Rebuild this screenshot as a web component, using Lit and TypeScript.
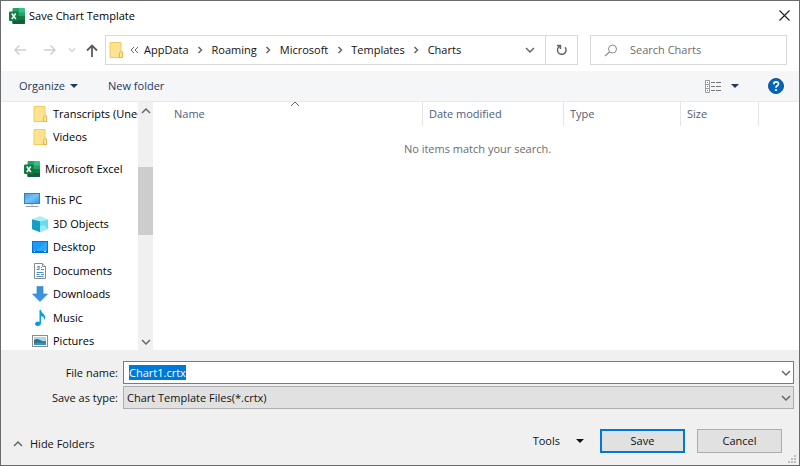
import { LitElement, html, css, svg, nothing } from "lit";
import { customElement, query } from "lit/decorators.js";

const chevron = (d: string, size = 10) => html`<svg class="chev" width=${size} height=${size} viewBox="0 0 10 10" aria-hidden="true"><path d=${d} /></svg>`;
const DOWN = "M1 3l4 4 4-4";
const UP = "M1 7l4-4 4 4";
const RIGHT = "M3.500 2l3 3-3 3";

const glyphs: Record<string, unknown> = {
  folder: svg`<path d="M2 .5h11v9.500h1.500v5.500H2z" fill="#ffe391" stroke="#efcb62"/><path d="M11.500 15.500v-4.500l1.500-1.500 1.500 1v5z" fill="#ffe9a3" stroke="#e3b645"/>`,
  excel: svg`<path d="M4.500 0H10v8H3.500V1q0-1 1-1z" fill="#21a366"/><path d="M10 0h5q1 0 1 1v4h-6z" fill="#33c481"/><path d="M10 4.500h6V8h-6z" fill="#21a366"/><path d="M3.500 8H10v8H4.500q-1 0-1-1z" fill="#185c37"/><path d="M10 8h6v7q0 1-1 1h-5z" fill="#107c41"/><path d="M3.500 12H16v3q0 1-1 1H4.500q-1 0-1-1z" fill="#185c37"/><rect y="3.500" width="9.500" height="9.500" rx="1" fill="#107c41"/><path d="M2.800 5.500l4 5.500M6.800 5.500l-4 5.500" stroke="#fff" stroke-width="1.500" fill="none"/>`,
  pc: svg`<defs><linearGradient id="pc" x2="1" y2="1"><stop stop-color="#3f9fe8"/><stop offset=".5" stop-color="#75c3fb"/><stop offset="1" stop-color="#2a93ee"/></linearGradient></defs><rect x=".5" y="1.500" width="15" height="10" fill="url(#pc)" stroke="#3b7fb5"/><path d="M6.500 12h3v1.500h-3z" fill="#c9d3dc"/><path d="M1.500 14.500h13" stroke="#8fa0ae"/>`,
  objects: svg`<path d="M0 3.500L8 1v15L0 13z" fill="#1dabc9"/><path d="M8 5l8-1.500V13l-8 3z" fill="#67dbe9"/><path d="M0 3.500L8 0l8 3.500L8 5.500z" fill="#a9f0f6"/><path d="M0 3.500l8 2V16l-8-3z" fill="#169fc3"/><path d="M8 10l4-1 4 4-8 3z" fill="#9ceaf3"/>`,
  desktop: svg`<rect x=".5" y="2.500" width="15" height="11" fill="#1a9bfb" stroke="#0873cf"/><path d="M5 11L14 3h1v9H5z" fill="#40b0ff" opacity=".6"/><path d="M1 12h14v1H1z" fill="#0766b8"/><path d="M2 12.500h1M12 12.500h2" stroke="#d3ecff"/>`,
  documents: svg`<path d="M2.500.5h8l3 3v12h-11z" fill="#fff" stroke="#8a8a8a"/><path d="M10.500.5v3h3" fill="#eee" stroke="#8a8a8a"/><path d="M4.500 6.500h3M9 6.500h3M9 4.500h1M4.500 9.500h7M4.500 11.500h3M9 11.500h3M4.500 13.500h7" stroke="#4a91c8"/><path d="M5 4.500l2-1.500v3" stroke="#1b7fd0" fill="none"/>`,
  downloads: svg`<path d="M5 .5h6V8h4.500L8 15.500.5 8H5z" fill="#3a92dc" stroke="#2d7fca" stroke-width=".6"/>`,
  music: svg`<path d="M7.500 0H9q.2 2.500 2.500 4 2.500 2 1.200 6-.8-3.500-3.700-4v7q0 2.500-3.200 3-2.800.2-2.800-1.900 0-2.400 3-2.500 1 0 1.500.3z" fill="#0c9bea"/>`,
  pictures: svg`<rect x=".5" y="2.500" width="15" height="11" fill="#fff" stroke="#8c8c8c"/><path d="M2 4h12v8H2z" fill="#a8d8f5"/><path d="M2 7q3-2 6 0t6 1v4H2z" fill="#416f70"/><path d="M2 10.500q6-2 12-.5v2H2z" fill="#2c93d2"/>`,
};
const icon = (name: string) => html`<svg class="icon" width="16" height="16" viewBox="0 0 16 16" aria-hidden="true">${glyphs[name]}</svg>`;

const tree = [
  { icon: "folder", label: "Transcripts (Unedited)", level: 2 },
  { icon: "folder", label: "Videos", level: 2 },
  { icon: "excel", label: "Microsoft Excel", level: 1, gap: true },
  { icon: "pc", label: "This PC", level: 1, gap: true },
  { icon: "objects", label: "3D Objects", level: 2 },
  { icon: "desktop", label: "Desktop", level: 2 },
  { icon: "documents", label: "Documents", level: 2 },
  { icon: "downloads", label: "Downloads", level: 2 },
  { icon: "music", label: "Music", level: 2 },
  { icon: "pictures", label: "Pictures", level: 2 },
];
const crumbs = ["AppData", "Roaming", "Microsoft", "Templates", "Charts"];

@customElement("app-root")
export class AppRoot extends LitElement {
  static styles = css`
    :host { display: flex; flex-direction: column; box-sizing: border-box; min-height: 100vh; border: 1px solid #6b6a6d; background: #fff; color: #111; font: 11px/16px "Open Sans", "Noto Sans", sans-serif; }
    *, *::before { box-sizing: border-box; }
    button, input, select { font: inherit; color: inherit; margin: 0; padding: 0; border: 0; background: none; border-radius: 0; outline: none; }
    button { display: inline-flex; align-items: center; justify-content: center; white-space: nowrap; }
    svg { display: block; flex: none; }
    .chev path { fill: none; stroke: #666; stroke-width: 1.5; }
    .title { display: flex; align-items: center; height: 29px; padding: 0 9px 0 8px; gap: 4px; }
    h1 { flex: 1; margin: 0; font: inherit; color: #000; }
    .nav { display: flex; align-items: center; padding: 5px 12px 6px 12px; height: 41px; }
    .nav > .step { width: 14px; margin-right: 16px; }
    .nav > .recent { width: 10px; margin-right: 2px; margin-left: -6px; }
    .recent path { stroke: #ccc; }
    .nav > .up { width: 26px; }
    .address { display: flex; flex: 1; height: 30px; border: 1px solid #d9d9d9; align-items: stretch; }
    .crumbs { display: flex; flex: 1; align-items: center; padding-left: 2px; }
    .more { width: 20px; height: 16px; padding-left: 1px; }
    .more path { fill: none; stroke: #666; }
    .sep { width: 23px; display: flex; justify-content: center; }
    .drop { width: 30px; }
    .refresh { width: 32px; border-left: 1px solid #d9d9d9; }
    .search { display: flex; align-items: center; width: 197px; height: 30px; margin-left: 12px; padding-left: 13px; gap: 12px; border: 1px solid #d9d9d9; }
    .search input { flex: 1; min-width: 0; }
    .search input::placeholder { color: #6d6d6d; opacity: 1; }
    .tools { display: flex; align-items: center; height: 31px; padding: 0 15px 0 18px; background: #f5f6f7; border-bottom: 1px solid #e8e9eb; color: #1e395b; }
    .organize { gap: 5px; margin-right: 30px; }
    .view { margin-left: auto; gap: 10px; margin-right: 29px; }
    .body { display: flex; flex: 1; min-height: 248px; }
    .side { display: flex; width: 152px; margin-right: 7px; height: 248px; }
    .treebox { flex: 1; overflow: hidden; }
    ul { list-style: none; margin: 0; padding: 0; height: calc(100% + 3px); display: flex; flex-direction: column; }
    li { flex: 1; display: flex; align-items: center; gap: 5px; padding-left: 23px; white-space: nowrap; color: #000; }
    li.child { padding-left: 31px; }
    li.gap { margin-top: 8px; }
    .scroll { width: 15px; background: #f0f0f0; display: flex; flex-direction: column; align-items: center; }
    .scroll button { width: 15px; height: 17px; }
    .thumb { width: 15px; height: 68px; margin: 48px 0 auto; background: #cdcdcd; }
    .list { flex: 1; min-width: 0; padding-left: 8px; }
    table { width: 100%; table-layout: fixed; border-collapse: separate; border-spacing: 0; }
    .name { width: 255px; } .date { width: 141px; } .type { width: 117px; } .size { width: 78px; }
    th { position: relative; height: 24px; padding: 0 6px; text-align: left; font-weight: normal; color: #4c607a; border-right: 1px solid #e5e5e5; }
    th.rest { border: 0; }
    .sort { position: absolute; top: -3px; left: 50%; margin-left: -5px; }
    .sort path { stroke-width: 1; }
    td { padding: 15px 12px 0 0; text-align: center; color: #6d6d6d; }
    .foot { background: #f0f0f0; padding: 11px 5px 0 12px; min-height: 115px; position: relative; }
    .form { display: grid; grid-template-columns: 105px 1fr; column-gap: 5px; row-gap: 2px; align-items: center; }
    .form label { text-align: right; }
    .combo { display: grid; grid-template-columns: 1fr 17px; height: 23px; }
    .combo > * { grid-row: 1; }
    .combo .chev { grid-column: 2; align-self: center; justify-self: center; pointer-events: none; }
    .combo input, .combo select { grid-column: 1 / 3; width: 100%; height: 23px; appearance: none; }
    .combo input { border: 1px solid #2a8fe0; background: #fff; padding: 0 18px 1px 5px; }
    .combo input:focus { outline: 1px solid #2a8fe0; outline-offset: -1px; }
    .combo input::selection { background: #0078d7; color: #fff; }
    .combo select { border: 1px solid #adadad; background: #e1e1e1; padding: 0 18px 0 3px; }
    .actions { display: flex; align-items: center; margin-top: 20px; padding-right: 12px; }
    .hide { gap: 7px; margin: 5px auto 0 0; }
    .menu { gap: 16px; margin-right: 16px; }
    .push { width: 85px; height: 24px; background: #e1e1e1; border: 1px solid #adadad; }
    .push.primary { border: 2px solid #0078d7; margin-right: 12px; }
    .grip { position: absolute; right: 2px; bottom: 1px; }
  `;

  @query("#file") private file!: HTMLInputElement;

  firstUpdated() {
    this.file.focus();
    this.file.select();
  }

  render() {
    const caret = (fill: string) => html`<svg width="8" height="4" viewBox="0 0 8 4" aria-hidden="true"><path d="M0 0h8L4 4z" fill=${fill} /></svg>`;
    return html`
      <header class="title">
        ${icon("excel")}
        <h1>Save Chart Template</h1>
        <button aria-label="Close"><svg width="11" height="11" viewBox="0 0 11 11"><path d="M.5.5l10 10M10.500.5l-10 10" stroke="#222" stroke-width="1.200" /></svg></button>
      </header>
      <nav class="nav">
        <button class="step" aria-label="Back"><svg width="14" height="12" viewBox="0 0 14 12"><path d="M13 6H2M6.500 1.500L2 6l4.500 4.500" fill="none" stroke="#d0d0d0" stroke-width="1.500" /></svg></button>
        <button class="step" aria-label="Forward"><svg width="14" height="12" viewBox="0 0 14 12"><path d="M1 6h11M7.500 1.500L12 6l-4.500 4.500" fill="none" stroke="#d0d0d0" stroke-width="1.500" /></svg></button>
        <button class="recent" aria-label="Recent locations">${chevron(DOWN, 8)}</button>
        <button class="up" aria-label="Up"><svg width="12" height="13" viewBox="0 0 12 13"><path d="M6 13V2M1 6.500l5-5 5 5" fill="none" stroke="#5c5c5c" stroke-width="1.800" /></svg></button>
        <div class="address">
          <div class="crumbs">
            ${icon("folder")}
            <button class="more" aria-label="More folders"><svg width="9" height="8" viewBox="0 0 9 8"><path d="M4 1L1 4l3 3M8 1L5 4l3 3" /></svg></button>
            ${crumbs.map((c, i) => html`${i ? html`<span class="sep">${chevron(RIGHT)}</span>` : nothing}<button>${c}</button>`)}
          </div>
          <button class="drop" aria-label="Previous locations">${chevron(DOWN)}</button>
          <button class="refresh" aria-label="Refresh"><svg width="12" height="12" viewBox="0 0 12 12"><path d="M1 1.500h3.500v3.500M4.200 2A4.300 4.300 0 1 0 9 3.200" fill="none" stroke="#666" stroke-width="1.500" /></svg></button>
        </div>
        <div class="search">
          <svg width="14" height="13" viewBox="0 0 14 13" aria-hidden="true"><circle cx="8.500" cy="5" r="4" fill="none" stroke="#8a8a8a" /><path d="M5.500 8L1 12" stroke="#8a8a8a" stroke-width="1.200" /></svg>
          <input type="text" aria-label="Search Charts" placeholder="Search Charts" />
        </div>
      </nav>
      <div class="tools">
        <button class="organize">Organize ${caret("#1e395b")}</button>
        <button>New folder</button>
        <button class="view" aria-label="Change your view">
          <svg width="16" height="13" viewBox="0 0 16 13"><path d="M.5.5h4v12h-4zM.5 4.500h4M.5 8.500h4" fill="#fff" stroke="#999" /><path d="M2 2.500h1M2 6.500h1M2 10.500h1" stroke="#4d7fae" /><path d="M6 2.500h4M11 2.500h5M6 6.500h4M11 6.500h5M6 10.500h4M11 10.500h5" stroke="#777" /></svg>
          ${caret("#1e395b")}
        </button>
        <button aria-label="Help"><svg width="16" height="16" viewBox="0 0 16 16"><circle cx="8" cy="8" r="7.500" fill="#0067c0" stroke="#1b4f87" /><path d="M5.700 6.200q0-2.400 2.400-2.400t2.400 2q0 1.200-1.300 2T8 9.800" fill="none" stroke="#fff" stroke-width="1.700" /><circle cx="8" cy="12" r="1.100" fill="#fff" /></svg></button>
      </div>
      <main class="body">
        <aside class="side">
          <div class="treebox"><ul>
            ${tree.map((n) => html`<li class="${n.level === 2 ? "child" : ""} ${n.gap ? "gap" : ""}">${icon(n.icon)}<span>${n.label}</span></li>`)}
          </ul></div>
          <div class="scroll">
            <button aria-label="Scroll up">${chevron(UP)}</button>
            <div class="thumb"></div>
            <button aria-label="Scroll down">${chevron(DOWN)}</button>
          </div>
        </aside>
        <section class="list">
          <table>
            <thead><tr>
              <th class="name"><span class="sort">${chevron(UP)}</span>Name</th>
              <th class="date">Date modified</th>
              <th class="type">Type</th>
              <th class="size">Size</th>
              <th class="rest"></th>
            </tr></thead>
            <tbody><tr><td colspan="5">No items match your search.</td></tr></tbody>
          </table>
        </section>
      </main>
      <footer class="foot">
        <div class="form">
          <label for="file">File name:</label>
          <div class="combo"><input id="file" type="text" value="Chart1.crtx" />${chevron(DOWN)}</div>
          <label for="type">Save as type:</label>
          <div class="combo"><select id="type"><option>Chart Template Files(*.crtx)</option></select>${chevron(DOWN)}</div>
        </div>
        <div class="actions">
          <button class="hide">${chevron(UP)}Hide Folders</button>
          <button class="menu">Tools ${caret("#111")}</button>
          <button class="push primary">Save</button>
          <button class="push">Cancel</button>
        </div>
        <svg class="grip" width="9" height="9" viewBox="0 0 9 9" aria-hidden="true"><path d="M6 0h2v2H6zM3 3h2v2H3zM6 3h2v2H6zM0 6h2v2H0zM3 6h2v2H3zM6 6h2v2H6z" fill="#bdbdbd" /></svg>
      </footer>
    `;
  }
}
